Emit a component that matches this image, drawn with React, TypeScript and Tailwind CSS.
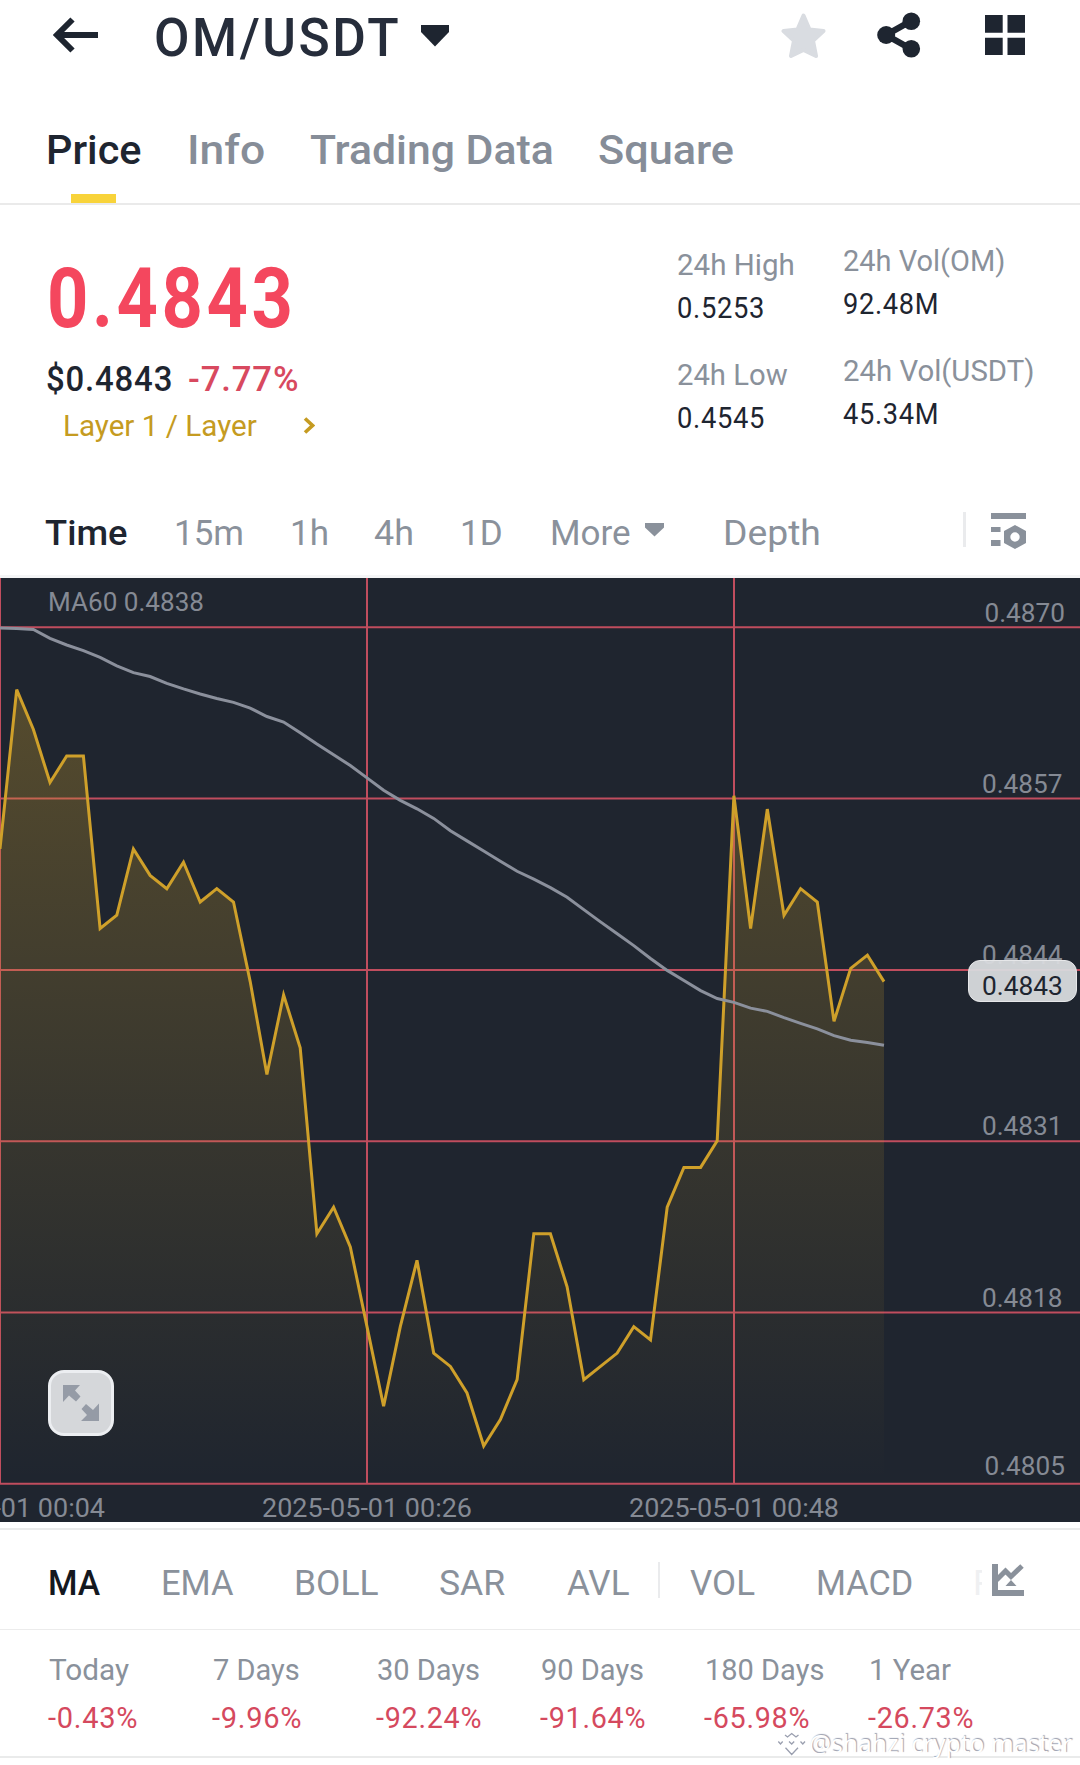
import { ReactNode, useLayoutEffect, useRef } from "react";
import { clsx } from "clsx";

// Squeezes or stretches a label horizontally so it fills its box exactly.
function Fit({ className, children }: { className?: string; children: ReactNode }) {
  const box = useRef<HTMLSpanElement>(null);
  const inner = useRef<HTMLSpanElement>(null);

  useLayoutEffect(() => {
    const fit = () => {
      if (!box.current || !inner.current) return;
      const ratio = box.current.clientWidth / inner.current.offsetWidth;
      inner.current.style.transform = `scaleX(${ratio})`;
    };
    fit();
    document.fonts?.ready.then(fit);
  }, []);

  return (
    <span ref={box} className={clsx("block shrink-0 whitespace-nowrap", className)}>
      <span ref={inner} className="inline-block origin-left">
        {children}
      </span>
    </span>
  );
}

const STEP = 16.68;
const TICK = 13.27;

// Ticks below the top of the visible range, one per minute.
const price = [
  17, 5, 8, 12, 10, 10, 23, 22, 17, 19, 20, 18, 21, 20, 21, 27, 34, 28, 32, 46, 44, 47, 53, 59, 53,
  48, 55, 56, 58, 62, 60, 57, 46, 46, 50, 57, 56, 55, 53, 54, 44, 41, 41, 39, 13, 23, 14, 22, 20, 21,
  30, 26, 25, 27,
];

const ma60 = [
  50, 50.5, 51.5, 60.3, 67, 72.7, 79.4, 87.9, 94.6, 98.5, 105.3, 110.9, 116, 120.5, 124.4, 130.1,
  138.5, 144.1, 154.8, 166.1, 176.8, 187.5, 199.9, 212.2, 222.4, 230.8, 240.4, 252.8, 262.9, 273,
  283.2, 293.3, 301.2, 309.6, 319.2, 331.6, 343.9, 355.8, 367.6, 380.5, 392.4, 402.5, 412.6, 420.5,
  424.4, 430.1, 433.4, 439.6, 445.3, 450.9, 457.7, 462.2, 464.4, 467.2,
];

const toPoints = (ys: number[]) => ys.map((y, i) => `${(i * STEP).toFixed(1)},${y.toFixed(1)}`).join(" ");

const priceLine = toPoints(price.map((t) => 45.3 + t * TICK));
const maLine = toPoints(ma60);
const lastX = (price.length - 1) * STEP;

const axis = [
  { label: "0.4870", x: 984.5, y: 44 },
  { label: "0.4857", x: 982, y: 215 },
  { label: "0.4844", x: 982, y: 386 },
  { label: "0.4831", x: 982, y: 557 },
  { label: "0.4818", x: 982, y: 729 },
  { label: "0.4805", x: 984.5, y: 897 },
];

const tabs = [
  { label: "Price", cls: "w-[95px] ml-[46px] text-[#1e2530]" },
  { label: "Info", cls: "w-[78px] ml-[46px]" },
  { label: "Trading Data", cls: "w-[244px] ml-[45px]" },
  { label: "Square", cls: "w-[136px] ml-[44px]" },
];

const intervals = [
  { label: "15m", cls: "w-[70px] ml-[46px]" },
  { label: "1h", cls: "w-[39px] ml-[46px]" },
  { label: "4h", cls: "w-[40px] ml-[45px]" },
  { label: "1D", cls: "w-[43px] ml-[46px]" },
  { label: "More", cls: "w-[81px] ml-[47px]" },
];

const changes = [
  { label: "Today", value: "-0.43%", lw: "w-[80px]", vw: "w-[90px]" },
  { label: "7 Days", value: "-9.96%", lw: "w-[87px]", vw: "w-[90px]" },
  { label: "30 Days", value: "-92.24%", lw: "w-[103px]", vw: "w-[106px]" },
  { label: "90 Days", value: "-91.64%", lw: "w-[103px]", vw: "w-[106px]" },
  { label: "180 Days", value: "-65.98%", lw: "w-[119px]", vw: "w-[106px]" },
  { label: "1 Year", value: "-26.73%", lw: "w-[82px]", vw: "w-[106px]" },
];

function Header() {
  return (
    <header className="flex h-[78px] items-start text-[#1e2530]">
      <svg className="mt-[17px] ml-[53px] h-9 w-[46px]" viewBox="0 0 46 36" fill="none" stroke="currentColor" strokeWidth="6">
        <path d="M45 18H5" />
        <path d="M19.500 2.500L4 18l15.500 15.500" />
      </svg>
      <Fit className="mt-[11px] ml-[55px] w-[247px] text-[54px] leading-none font-medium tracking-wider text-[#262d3b]">
        OM/USDT
      </Fit>
      <svg className="mt-[25px] ml-[20px] h-[22px] w-[28px]" viewBox="0 0 28 22" fill="currentColor">
        <path d="M0 0h28v7L14 21.500 0 7z" />
      </svg>
      <svg className="mt-[13px] ml-[332px] h-[46px] w-[45px]" viewBox="0 0 45 46" fill="#d9dce1" stroke="#d9dce1" strokeWidth="4" strokeLinejoin="round">
        <path d="M22.500 2.500l6 14 14 1.500-10.500 9.700 3 15.300-12.500-6-12.500 6 3-15.300-10.500-9.700 14-1.500z" />
      </svg>
      <svg className="mt-[12px] ml-[51px] h-[47px] w-[44px]" viewBox="0 0 44 47" fill="currentColor">
        <path d="M9 23L34 9M9 23l25 14" stroke="currentColor" strokeWidth="6.500" />
        <circle cx="9.200" cy="23" r="9" />
        <circle cx="34.300" cy="9.300" r="8.800" />
        <circle cx="34.300" cy="36.800" r="8.800" />
      </svg>
      <svg className="mt-[15px] ml-[64px] h-10 w-10" viewBox="0 0 40 40" fill="currentColor">
        <path d="M0 0h17.700v17.700H0zM22.500 0H40v17.700H22.500zM0 22.700h17.700V40H0zM22.500 22.700H40V40H22.500z" />
      </svg>
    </header>
  );
}

function Tabs() {
  return (
    <nav className="h-[127px] border-b-2 border-[#eaeaea] pt-[52px]">
      <div className="flex text-[41px] leading-none font-medium text-[#868d98]">
        {tabs.map((t) => (
          <Fit key={t.label} className={t.cls}>
            {t.label}
          </Fit>
        ))}
      </div>
      <div className="mt-[23px] ml-[71px] h-[9px] w-[45px] bg-[#f8d33a]" />
    </nav>
  );
}

function Stat({ label, value, lw, vw }: { label: string; value: string; lw: string; vw: string }) {
  return (
    <div className="h-[110px] text-[29.500px] leading-none">
      <Fit className={clsx("text-[#8a919b]", lw)}>{label}</Fit>
      <Fit className={clsx("mt-[13px] tracking-wide text-[#1e2530]", vw)}>{value}</Fit>
    </div>
  );
}

function Summary() {
  return (
    <section className="flex h-[295px]">
      <div className="w-[677px] pt-[52px]">
        <Fit className="ml-[47px] w-[250px] text-[84px] leading-none font-bold tracking-wider text-[#f4475e]">0.4843</Fit>
        <div className="mt-[21px] flex text-[35px] leading-none font-medium">
          <Fit className="ml-[46px] w-[127px] tracking-wide text-[#1e2530]">$0.4843</Fit>
          <Fit className="ml-[15px] w-[111px] tracking-wide text-[#d8495f]">-7.77%</Fit>
        </div>
        <div className="mt-[15px] flex items-start text-[29px] leading-none text-[#c59b21]">
          <Fit className="ml-[63px] w-[194px]">Layer 1 / Layer</Fit>
          <svg className="mt-[5px] ml-[46px] h-[17px] w-[12px]" viewBox="0 0 12 17" fill="none" stroke="currentColor" strokeWidth="3.600">
            <path d="M2 1.500l7.500 7L2 15.500" />
          </svg>
        </div>
      </div>
      <div className="w-[166px] pt-[46px]">
        <Stat label="24h High" value="0.5253" lw="w-[118px]" vw="w-[88px]" />
        <Stat label="24h Low" value="0.4545" lw="w-[111px]" vw="w-[88px]" />
      </div>
      <div className="pt-[42px]">
        <Stat label="24h Vol(OM)" value="92.48M" lw="w-[162px]" vw="w-[96px]" />
        <Stat label="24h Vol(USDT)" value="45.34M" lw="w-[191px]" vw="w-[96px]" />
      </div>
    </section>
  );
}

function Intervals() {
  return (
    <section className="flex h-[78px] items-start border-b-[3px] border-[#f4f5f6] pt-[16px] text-[35px] leading-none text-[#8a919b]">
      <Fit className="ml-[45px] w-[83px] font-medium text-[#1e2530]">Time</Fit>
      {intervals.map((t) => (
        <Fit key={t.label} className={t.cls}>
          {t.label}
        </Fit>
      ))}
      <svg className="mt-[7px] ml-[14px] h-[14px] w-[19px]" viewBox="0 0 19 14" fill="currentColor">
        <path d="M0 0h19v4.500L9.500 13.500 0 4.500z" />
      </svg>
      <Fit className="ml-[59px] w-[98px]">Depth</Fit>
      <div className="-mt-[4px] ml-[142px] h-[35px] w-[3px] bg-[#eaebed]" />
      <svg className="-mt-[3px] ml-[25px] h-[36px] w-[35px]" viewBox="0 0 35 36" fill="currentColor">
        <path d="M0 0h35v6H0zM0 14h9.500v5H0zM0 27h9.500v6H0z" />
        <path fillRule="evenodd" d="M24 12l11 6v12l-11 6-11-6V18zM24 19.300a4.700 4.700 0 1 0 0 9.400 4.700 4.700 0 0 0 0-9.400z" />
      </svg>
    </section>
  );
}

function Chart() {
  return (
    <section className="relative h-[944px] bg-[#1f252f]">
      <svg className="block h-[944px] w-[1080px]" viewBox="0 0 1080 944">
        <defs>
          <linearGradient id="area" gradientUnits="userSpaceOnUse" x1="0" y1="112" x2="0" y2="902">
            <stop offset="0" stopColor="#cfa02a" stopOpacity="0.310" />
            <stop offset="1" stopColor="#cfa02a" stopOpacity="0" />
          </linearGradient>
        </defs>
        <g stroke="#c04d5e" strokeWidth="2">
          {[0, 1, 2, 3, 4, 5].map((i) => (
            <path key={i} d={`M0 ${49.3 + i * 171.3}H1080`} />
          ))}
          <path d="M0 0V906M367 0V906M734 0V906" />
        </g>
        <polygon points={`0,906 ${priceLine} ${lastX},906`} fill="url(#area)" />
        <polyline points={priceLine} fill="none" stroke="#cfa02a" strokeWidth="3" />
        <polyline points={maLine} fill="none" stroke="#8b909c" strokeWidth="3" />
        <g fill="#858a94" fontSize="26">
          <text x="48" y="33" textLength="156" lengthAdjust="spacingAndGlyphs">MA60 0.4838</text>
          {axis.map((a) => (
            <text key={a.label} x={a.x} y={a.y} textLength="80.500" lengthAdjust="spacingAndGlyphs">
              {a.label}
            </text>
          ))}
          <text x="-105" y="938.500" textLength="210" lengthAdjust="spacingAndGlyphs">2025-05-01 00:04</text>
          <text x="262" y="938.500" textLength="210" lengthAdjust="spacingAndGlyphs">2025-05-01 00:26</text>
          <text x="629" y="938.500" textLength="210" lengthAdjust="spacingAndGlyphs">2025-05-01 00:48</text>
        </g>
      </svg>
      <div className="absolute top-[382px] left-[968px] h-[42px] w-[109px] rounded-[12px] border border-[#e6e7e9] bg-[#d8dadd]/95 pt-[12px] pl-[13px] text-[26px] leading-none text-[#1e2530]">
        <Fit className="w-[81px]">0.4843</Fit>
      </div>
      <button className="absolute top-[792px] left-[48px] flex h-[66px] w-[66px] items-center justify-center rounded-[16px] border-[3px] border-[#eceef1] bg-[#d5d7da]">
        <svg className="h-[36px] w-[36px]" viewBox="0 0 36 36" fill="#959ba6">
          <path d="M0 0h17l-5 5.500 5.500 6-4.500 5-7-6L0 17z" />
          <path d="M36 36H18l6-6-5.500-6 4.500-5 7 6 6-6.500z" />
        </svg>
      </button>
    </section>
  );
}

function Indicators() {
  return (
    <section className="mt-[6px] flex h-[102px] items-start border-t-2 border-b border-t-[#eaebeb] border-b-[#ececec] pt-[36px] text-[35px] leading-none text-[#8a919b]">
      <Fit className="ml-[48px] w-[52px] font-medium text-[#14181f]">MA</Fit>
      <Fit className="ml-[61px] w-[73px]">EMA</Fit>
      <Fit className="ml-[60px] w-[85px]">BOLL</Fit>
      <Fit className="ml-[60px] w-[66px]">SAR</Fit>
      <Fit className="ml-[62px] w-[62px]">AVL</Fit>
      <div className="-mt-[4px] ml-[29px] h-[36px] w-[2px] bg-[#eaebed]" />
      <Fit className="ml-[30px] w-[65px]">VOL</Fit>
      <Fit className="ml-[61px] w-[97px]">MACD</Fit>
      <span className="ml-[60px] h-9 w-[9px] overflow-hidden text-[#eff0f2]">R</span>
      <svg className="-mt-[2px] ml-[10px] h-[32px] w-[32px]" viewBox="0 0 32 32" fill="currentColor">
        <path d="M0 0h6v26h26v6H0z" />
        <path d="M4.500 16L13.500 7l5.500 5.500L30 2" fill="none" stroke="currentColor" strokeWidth="5" />
        <path d="M13.500 22L19 16l5.500 6z" />
      </svg>
    </section>
  );
}

function Changes() {
  return (
    <section className="h-[128px] border-b-2 border-[#eaebeb] pt-[26px]">
      <div className="ml-[49px] grid w-[984px] grid-cols-6 text-[29px] leading-none">
        {changes.map((c) => (
          <div key={c.label}>
            <Fit className={clsx("text-[#8a919b]", c.lw)}>{c.label}</Fit>
            <Fit className={clsx("mt-[19px] -ml-px tracking-wide text-[#d5495e]", c.vw)}>{c.value}</Fit>
          </div>
        ))}
      </div>
    </section>
  );
}

function Watermark() {
  return (
    <div className="absolute top-[1729px] left-[777px] flex items-center gap-[2px]">
      <svg className="h-[28px] w-[30px]" viewBox="0 0 30 28" fill="none" stroke="#9a9faf" strokeWidth="1.300">
        <path d="M8 6l2.500 2 4.200-3.500L19 8l2.500-2M12 12.500l2.700 2.500 2.500-2.500M1.300 12.500L3.500 15l2.200-2.500M23.500 12.500l2.300 2.500 2.200-2.500M8.500 18.700l6.200 6.800 6.300-6.800" />
      </svg>
      <Fit className="w-[263px] font-['Noto_Sans'] text-[25px] leading-[28px] text-white [text-shadow:1px_-1px_1px_#9a9faf]">
        @shahzi crypto master
      </Fit>
    </div>
  );
}

export default function App() {
  return (
    <main className="relative h-[1765px] w-[1080px] overflow-hidden bg-white font-[Roboto,sans-serif]">
      <Header />
      <Tabs />
      <Summary />
      <Intervals />
      <Chart />
      <Indicators />
      <Changes />
      <Watermark />
    </main>
  );
}
